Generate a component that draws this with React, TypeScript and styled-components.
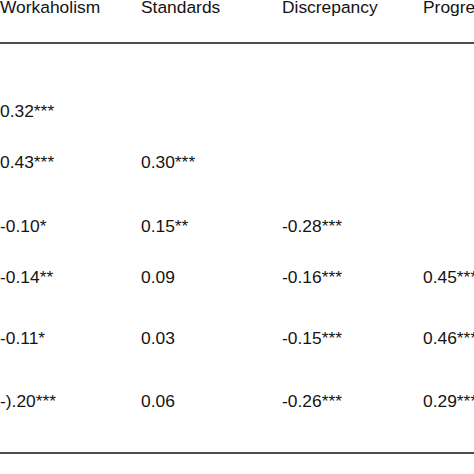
import React from "react";
import styled, { createGlobalStyle } from "styled-components";

const Global = createGlobalStyle`
  html, body { margin: 0; padding: 0; background: #ffffff; }
  body { font-family: "Liberation Sans", Arial, Helvetica, sans-serif; }
`;

const Frame = styled.div`
  width: 474px;
  height: 474px;
  overflow: hidden;
  background: #ffffff;
  color: #141414;
  font-family: "Liberation Sans", Arial, Helvetica, sans-serif;
  font-size: 17.4px;
`;

const Table = styled.div`
  width: 600px;
`;

const HeaderRow = styled.div`
  display: grid;
  grid-template-columns: repeat(4, 141px);
  margin-top: -3px;
  padding-bottom: 25px;
  border-bottom: 2px solid #4d4d4d;
  line-height: 20px;
  white-space: nowrap;
`;

const Body = styled.div`
  padding-top: 57px;
  padding-bottom: 41px;
  border-bottom: 2px solid #4d4d4d;
  display: flex;
  flex-direction: column;
`;

const Row = styled.div<{ $gap: number }>`
  display: grid;
  grid-template-columns: repeat(4, 141px);
  margin-top: ${(p) => p.$gap}px;
  line-height: 20px;
  height: 20px;
  white-space: nowrap;
`;

const Cell = styled.div`
  letter-spacing: 0;
`;

const headers = ["Workaholism", "Standards", "Discrepancy", "Progression"];

const rows: { gap: number; cells: string[] }[] = [
  { gap: 0, cells: ["0.32***"] },
  { gap: 31, cells: ["0.43***", "0.30***"] },
  { gap: 44, cells: ["-0.10*", "0.15**", "-0.28***"] },
  { gap: 31, cells: ["-0.14**", "0.09", "-0.16***", "0.45***"] },
  { gap: 41, cells: ["-0.11*", "0.03", "-0.15***", "0.46***"] },
  { gap: 43, cells: ["-).20***", "0.06", "-0.26***", "0.29***"] },
];

export default function App() {
  return (
    <>
      <Global />
      <Frame>
        <Table>
          <HeaderRow>
            {headers.map((h) => (
              <Cell key={h}>{h}</Cell>
            ))}
          </HeaderRow>
          <Body>
            {rows.map((r, i) => (
              <Row key={i} $gap={r.gap}>
                {r.cells.map((c, j) => (
                  <Cell key={j}>{c}</Cell>
                ))}
              </Row>
            ))}
          </Body>
        </Table>
      </Frame>
    </>
  );
}
